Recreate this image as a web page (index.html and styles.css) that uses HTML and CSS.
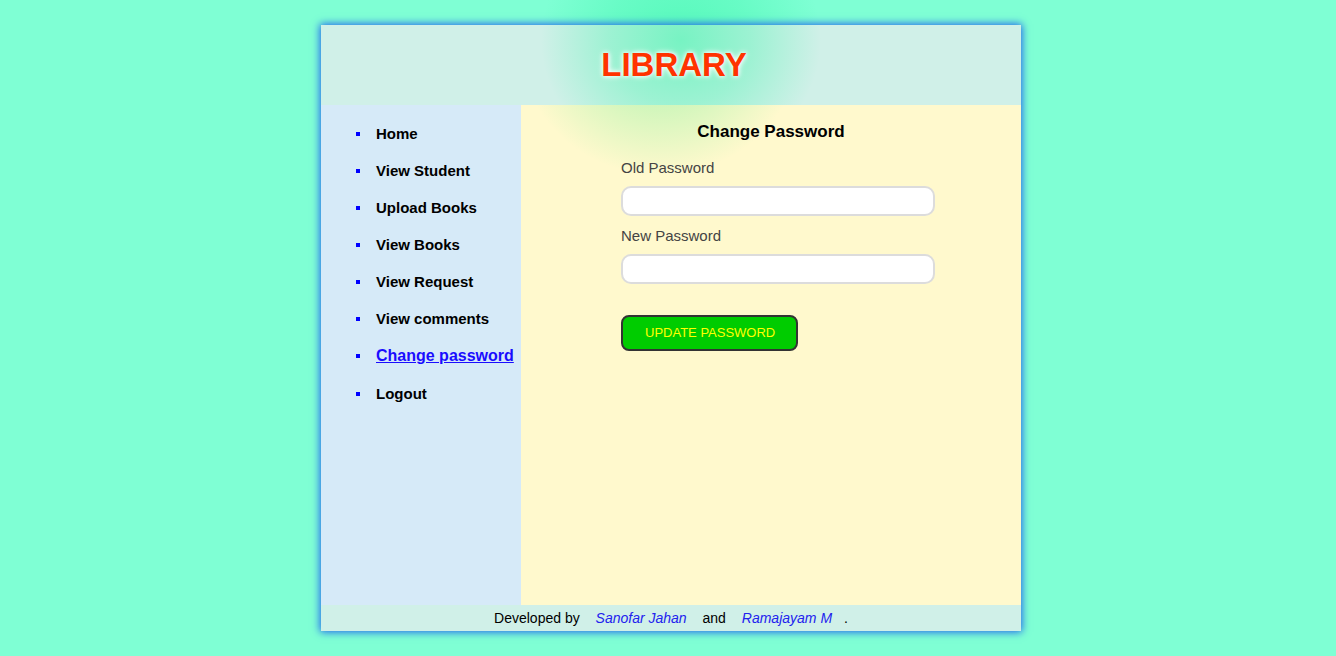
FILE: index.html
```html
<!DOCTYPE html>
<html lang="en">
<head>
<meta charset="utf-8">
<title>Library - Change Password</title>
<link rel="stylesheet" href="styles.css">
</head>
<body>
<div class="page">
  <header class="masthead">
    <h1 class="brand">LIBRARY</h1>
  </header>
  <div class="main">
    <nav class="sidebar">
      <ul class="menu">
        <li><a href="#">Home</a></li>
        <li><a href="#">View Student</a></li>
        <li><a href="#">Upload Books</a></li>
        <li><a href="#">View Books</a></li>
        <li><a href="#">View Request</a></li>
        <li><a href="#">View comments</a></li>
        <li class="active"><a href="#">Change password</a></li>
        <li><a href="#">Logout</a></li>
      </ul>
    </nav>
    <section class="content">
      <h2 class="title">Change Password</h2>
      <form class="form">
        <label class="label" for="old">Old Password</label>
        <input class="field" id="old" type="password">
        <label class="label" for="new">New Password</label>
        <input class="field" id="new" type="password">
        <button class="btn" type="button">UPDATE PASSWORD</button>
      </form>
    </section>
  </div>
  <footer class="footer">Developed by <a class="author" href="#">Sanofar Jahan</a> and <a class="author" href="#">Ramajayam M</a>.</footer>
</div>
</body>
</html>
```
FILE: styles.css
```css
html, body {
  margin: 0;
  padding: 0;
}
body {
  padding-left: 6px;
  font-family: "Liberation Sans", Arial, sans-serif;
  background: radial-gradient(ellipse 140px 130px at 681px 40px, rgba(60,245,170,0.6) 0%, rgba(60,245,170,0.35) 50%, rgba(60,245,170,0) 100%) fixed, #7fffd4;
  height: 656px;
  overflow: hidden;
}
.page {
  width: 700px;
  margin: 25px auto 0;
  box-shadow: 0 0 8px 1px #1f5ff0;
}
.masthead {
  height: 80px;
  display: flex;
  align-items: center;
  justify-content: center;
  background: radial-gradient(ellipse 140px 130px at 681px 40px, rgba(60,245,170,0.6) 0%, rgba(60,245,170,0.35) 50%, rgba(60,245,170,0) 100%) fixed, #d0f0e8;
}
.brand {
  margin: 0 0 0 6px;
  font-size: 33px;
  font-weight: bold;
  color: #ff3300;
  text-shadow: 0 0 4px #fff, 0 0 6px #fff;
}
.main {
  display: flex;
  height: 500px;
}
.sidebar {
  width: 200px;
  background: #d6eaf8;
}
.menu {
  list-style: none;
  margin: 0;
  padding: 20px 0 0 35px;
}
.menu li {
  display: flex;
  align-items: center;
  margin-bottom: 20px;
  font-size: 15px;
  font-weight: bold;
}
.menu li::before {
  content: "";
  width: 4px;
  height: 4px;
  background: #0000ff;
  margin-right: 16px;
  flex: none;
}
.menu a {
  color: #000;
  text-decoration: none;
}
.menu .active {
  font-size: 16px;
}
.menu .active a {
  color: #1a0dff;
  text-decoration: underline;
}
.content {
  flex: 1;
  padding-top: 17px;
  background: radial-gradient(ellipse 140px 130px at 660px 45px, rgba(110,240,150,0.55) 0%, rgba(110,240,150,0.3) 50%, rgba(110,240,150,0) 100%) fixed, #fff9cd;
}
.title {
  margin: 0;
  font-size: 17px;
  line-height: 20px;
  font-weight: bold;
  text-align: center;
  color: #000;
}
.form {
  display: flex;
  flex-direction: column;
  align-items: flex-start;
  padding: 17px 0 0 100px;
}
.label {
  font-size: 15px;
  line-height: 18px;
  color: #444;
}
.field {
  box-sizing: border-box;
  width: 314px;
  height: 30px;
  margin: 9px 0 11px;
  border: 2px solid #dcdcdc;
  border-radius: 10px;
  background: #fff;
  outline: none;
}
.btn {
  margin-top: 20px;
  padding: 8px 21px 8px 22px;
  border: 2px solid #333;
  border-radius: 8px;
  background: #00cc00;
  color: #ffff00;
  font-family: "Liberation Sans", Arial, sans-serif;
  font-size: 13px;
  line-height: 16px;
}
.footer {
  height: 26px;
  line-height: 26px;
  text-align: center;
  font-size: 14px;
  color: #000;
  background: #d0f0e8;
}
.author {
  padding: 0 12px;
  color: #2222ee;
  font-style: italic;
  text-decoration: none;
}
```
